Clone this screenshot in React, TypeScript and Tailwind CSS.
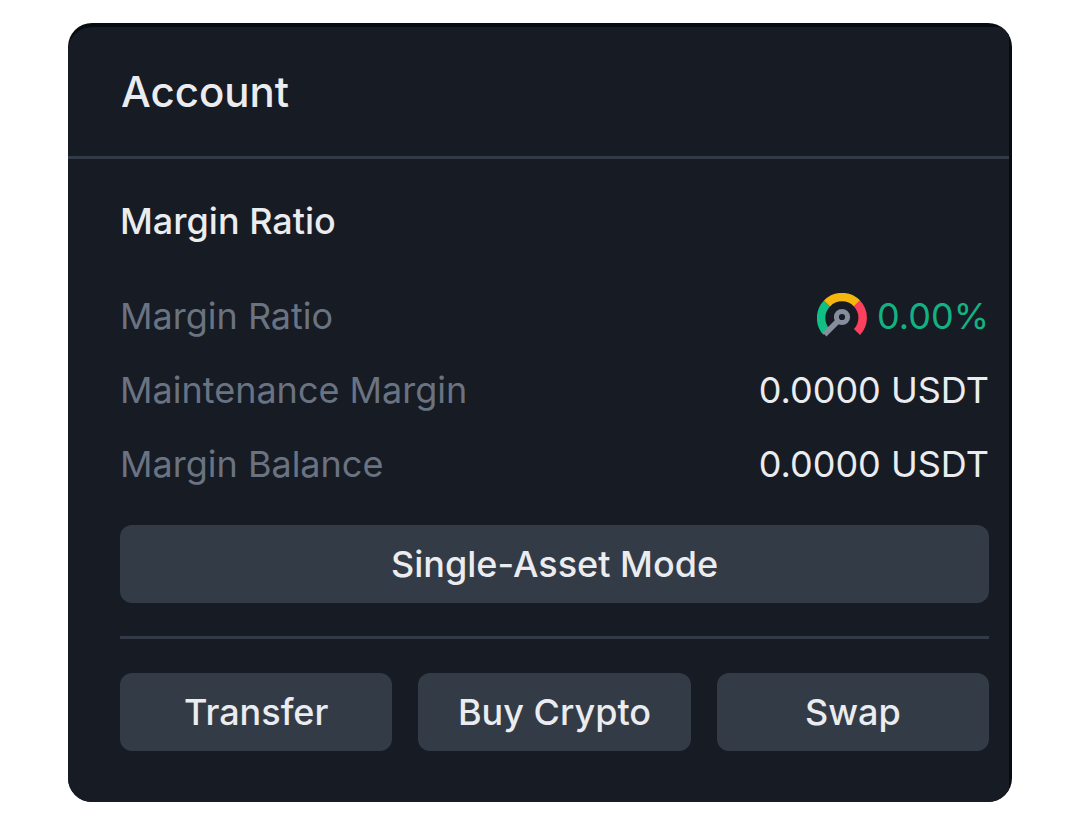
import React from 'react';

interface MarginRow {
  label: string;
  value: string;
  gauge?: boolean;
}

const rows: MarginRow[] = [
  { label: 'Margin Ratio', value: '0.00%', gauge: true },
  { label: 'Maintenance Margin', value: '0.0000 USDT' },
  { label: 'Margin Balance', value: '0.0000 USDT' },
];

const actions = ['Transfer', 'Buy Crypto', 'Swap'];

const RiskGauge: React.FC = () => (
  <svg className="w-[50px] h-[46px] shrink-0" viewBox="0 0 50 46" fill="none" aria-hidden="true">
    <path d="M9.5 39 A20.8 20.8 0 0 1 10 10.5" stroke="#0fbf83" strokeWidth="8.5" />
    <path d="M10 10.5 A20.8 20.8 0 0 1 40 10.5" stroke="#f5b70d" strokeWidth="8.5" />
    <path d="M40 10.5 A20.8 20.8 0 0 1 40 39" stroke="#fb415d" strokeWidth="8.5" />
    <path d="M7.5 41.5 L21.5 27.5" stroke="#848e9c" strokeWidth="5.5" />
    <circle cx="25" cy="24" r="5.6" stroke="#848e9c" strokeWidth="5" />
  </svg>
);

const ActionButton: React.FC<{ label: string }> = ({ label }) => (
  <button
    type="button"
    className="w-full h-[78px] rounded-xl bg-[#333b47] hover:bg-[#3d4654] text-[36px] leading-none font-medium text-[#eaecef]"
  >
    {label}
  </button>
);

export default function App() {
  return (
    <main className="min-h-screen bg-white px-[68px] pt-[23px] pb-[22px] font-['Inter','Lato',sans-serif] text-[#eaecef]">
      <section className="overflow-hidden rounded-3xl bg-[#080c11] pt-1 pr-[3px]">
        <div className="rounded-tl-3xl bg-[#171b24] pb-[51px]">
          <header className="flex h-[132px] items-center border-b-3 border-[#333a48] pl-[53px]">
            <h1 className="text-[42px] leading-[48px] font-medium">Account</h1>
          </header>

          <div className="pl-[52px] pr-5 pt-[38px]">
            <h2 className="text-[36px] leading-[48px] font-medium">Margin Ratio</h2>

            <dl className="mt-[34px] text-[36px]">
              {rows.map((row) => (
                <div key={row.label} className="flex h-[74px] items-center justify-between">
                  <dt className="text-[#6a7382]">{row.label}</dt>
                  <dd className={row.gauge ? 'flex items-center gap-2.5 text-[#12b283]' : ''}>
                    {row.gauge && <RiskGauge />}
                    {row.value}
                  </dd>
                </div>
              ))}
            </dl>

            <div className="mt-6 border-b-3 border-[#333a48] pb-[33px]">
              <ActionButton label="Single-Asset Mode" />
            </div>

            <div className="mt-[34px] grid grid-cols-3 gap-[26px]">
              {actions.map((label) => (
                <ActionButton key={label} label={label} />
              ))}
            </div>
          </div>
        </div>
      </section>
    </main>
  );
}
